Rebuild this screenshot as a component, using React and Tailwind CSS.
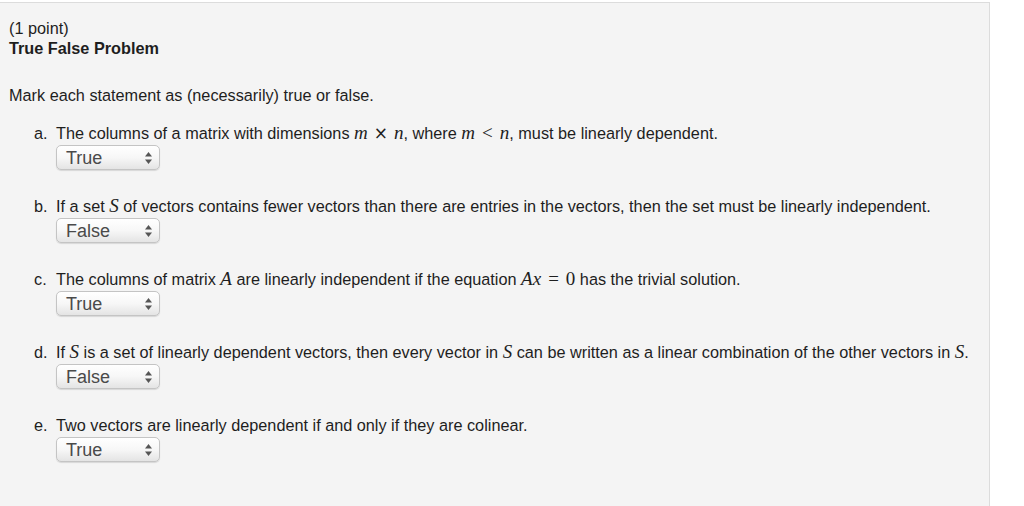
import React from "react";

const M = ({ children }) => (
  <span className="font-['Liberation_Serif',serif] italic text-[19px] leading-none">{children}</span>
);

const Op = ({ children, big }) => (
  <span className={big ? "font-['DejaVu_Sans',sans-serif] text-[17px] leading-none mx-[6px]" : "font-['Liberation_Serif',serif] text-[19px] leading-none mx-[7px]"}>{children}</span>
);

const Select = ({ value }) => (
  <div className="relative mt-[2px] ml-[22px] h-[25px] w-[104px] rounded-[5px] border border-[#c4c4c4] bg-gradient-to-b from-white via-[#f7f7f7] to-[#e4e4e4] shadow-[0_1px_1px_rgba(0,0,0,0.12)] flex items-center">
    <span className="pl-[9px] text-[18px] text-[#4a4a4a] leading-none">{value}</span>
    <svg className="absolute right-[7px] top-[6px]" width="7" height="12" viewBox="0 0 7 12">
      <path d="M3.5 0 L7 4.5 L0 4.5 Z" fill="#555" />
      <path d="M3.5 12 L7 7.5 L0 7.5 Z" fill="#555" />
    </svg>
  </div>
);

const Item = ({ letter, value, children }) => (
  <li className="mb-[26px]">
    <div className="flex h-[20px] items-center whitespace-nowrap">
      <span className="w-[22px] text-[16.25px]">{letter}.</span>
      <span className="text-[16.25px]">{children}</span>
    </div>
    <Select value={value} />
  </li>
);

export default function App() {
  return (
    <div className="h-[506px] w-[1024px] bg-white font-['Liberation_Sans',Arial,sans-serif] text-[#1e1e1e] overflow-hidden">
      <div className="mt-[2px] h-[504px] w-[990px] border-t border-r border-[#dcdcdc] bg-[#f4f4f4] pl-[9px] pt-[15px]">
        <div className="text-[16.25px] leading-[20px]">(1 point)</div>
        <div className="text-[16.25px] leading-[20px] font-bold">True False Problem</div>
        <p className="mt-[27px] text-[16.25px] leading-[20px]">Mark each statement as (necessarily) true or false.</p>
        <ol className="mt-[18px] pl-[25px]">
          <Item letter="a" value="True">
            The columns of a matrix with dimensions&nbsp;<M>m</M><Op big>×</Op><M>n</M>, where&nbsp;<M>m</M><Op>&lt;</Op><M>n</M>, must be linearly dependent.
          </Item>
          <Item letter="b" value="False">
            If a set&nbsp;<M>S</M>&nbsp;of vectors contains fewer vectors than there are entries in the vectors, then the set must be linearly independent.
          </Item>
          <Item letter="c" value="True">
            The columns of matrix&nbsp;<M>A</M>&nbsp;are linearly independent if the equation&nbsp;<M>Ax</M><Op>=</Op><span className="font-['Liberation_Serif',serif] text-[19px] leading-none">0</span>&nbsp;has the trivial solution.
          </Item>
          <Item letter="d" value="False">
            If&nbsp;<M>S</M>&nbsp;is a set of linearly dependent vectors, then every vector in&nbsp;<M>S</M>&nbsp;can be written as a linear combination of the other vectors in&nbsp;<M>S</M>.
          </Item>
          <Item letter="e" value="True">
            Two vectors are linearly dependent if and only if they are colinear.
          </Item>
        </ol>
      </div>
    </div>
  );
}
